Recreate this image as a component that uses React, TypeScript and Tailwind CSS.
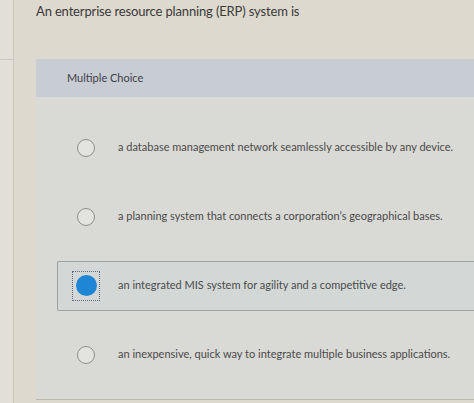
import React from "react";

const options = [
  "a database management network seamlessly accessible by any device.",
  "a planning system that connects a corporation\u2019s geographical bases.",
  "an integrated MIS system for agility and a competitive edge.",
  "an inexpensive, quick way to integrate multiple business applications.",
];

export default function App() {
  const selected = 2;
  return (
    <div
      className="w-[474px] h-[403px] overflow-hidden flex bg-[#ddd9ce] text-[#404040]"
      style={{ fontFamily: "Lato, 'Open Sans', sans-serif" }}
    >
      <div className="w-[14px] shrink-0 border-r border-[#cbc7bb] bg-[#e2dfd6]">
        <div className="h-[60px] border-b border-[#cbc7bb]" />
      </div>
      <div className="flex-1 flex flex-col pl-[22px]">
        <div className="h-[59px] pt-[3px]">
          <h1 className="text-[13px] leading-[17px] tracking-[-0.15px] text-[#3a3a3a]">
            An enterprise resource planning (ERP) system is
          </h1>
        </div>
        <div className="flex-1 flex flex-col border-b border-[#b9b7ae] mb-[3px]">
          <div className="h-[38px] bg-[#c8ccd3] pl-[31px] flex items-center text-[11px] text-[#3d3f4a]">
            Multiple Choice
          </div>
          <div className="flex-1 bg-[#d9d9d5] pt-[16px]">
            {options.map((opt, i) => {
              const isSel = i === selected;
              return (
                <div key={i} className="h-[69px] flex items-center pl-[21px]">
                  <div
                    className={
                      "flex-1 h-[50px] flex items-center pl-[14px] border border-r-0 rounded-l-[2px] " +
                      (isSel ? "border-[#9aa3a6] bg-[#d3d8d7]" : "border-transparent")
                    }
                  >
                    <div
                      className={
                        "w-[28px] h-[30px] flex items-center justify-center " +
                        (isSel ? "border border-dotted border-[#5a6a80]" : "")
                      }
                    >
                      {isSel ? (
                        <div className="w-[21px] h-[21px] rounded-full bg-[#1f86d6]" />
                      ) : (
                        <div className="w-[18px] h-[18px] rounded-full border-[1.5px] border-[#8d8d8a] bg-[#e3e3df]" />
                      )}
                    </div>
                    <span className="ml-[18px] text-[11px] text-[#4a4a4a] whitespace-nowrap">
                      {opt}
                    </span>
                  </div>
                </div>
              );
            })}
          </div>
        </div>
      </div>
    </div>
  );
}
